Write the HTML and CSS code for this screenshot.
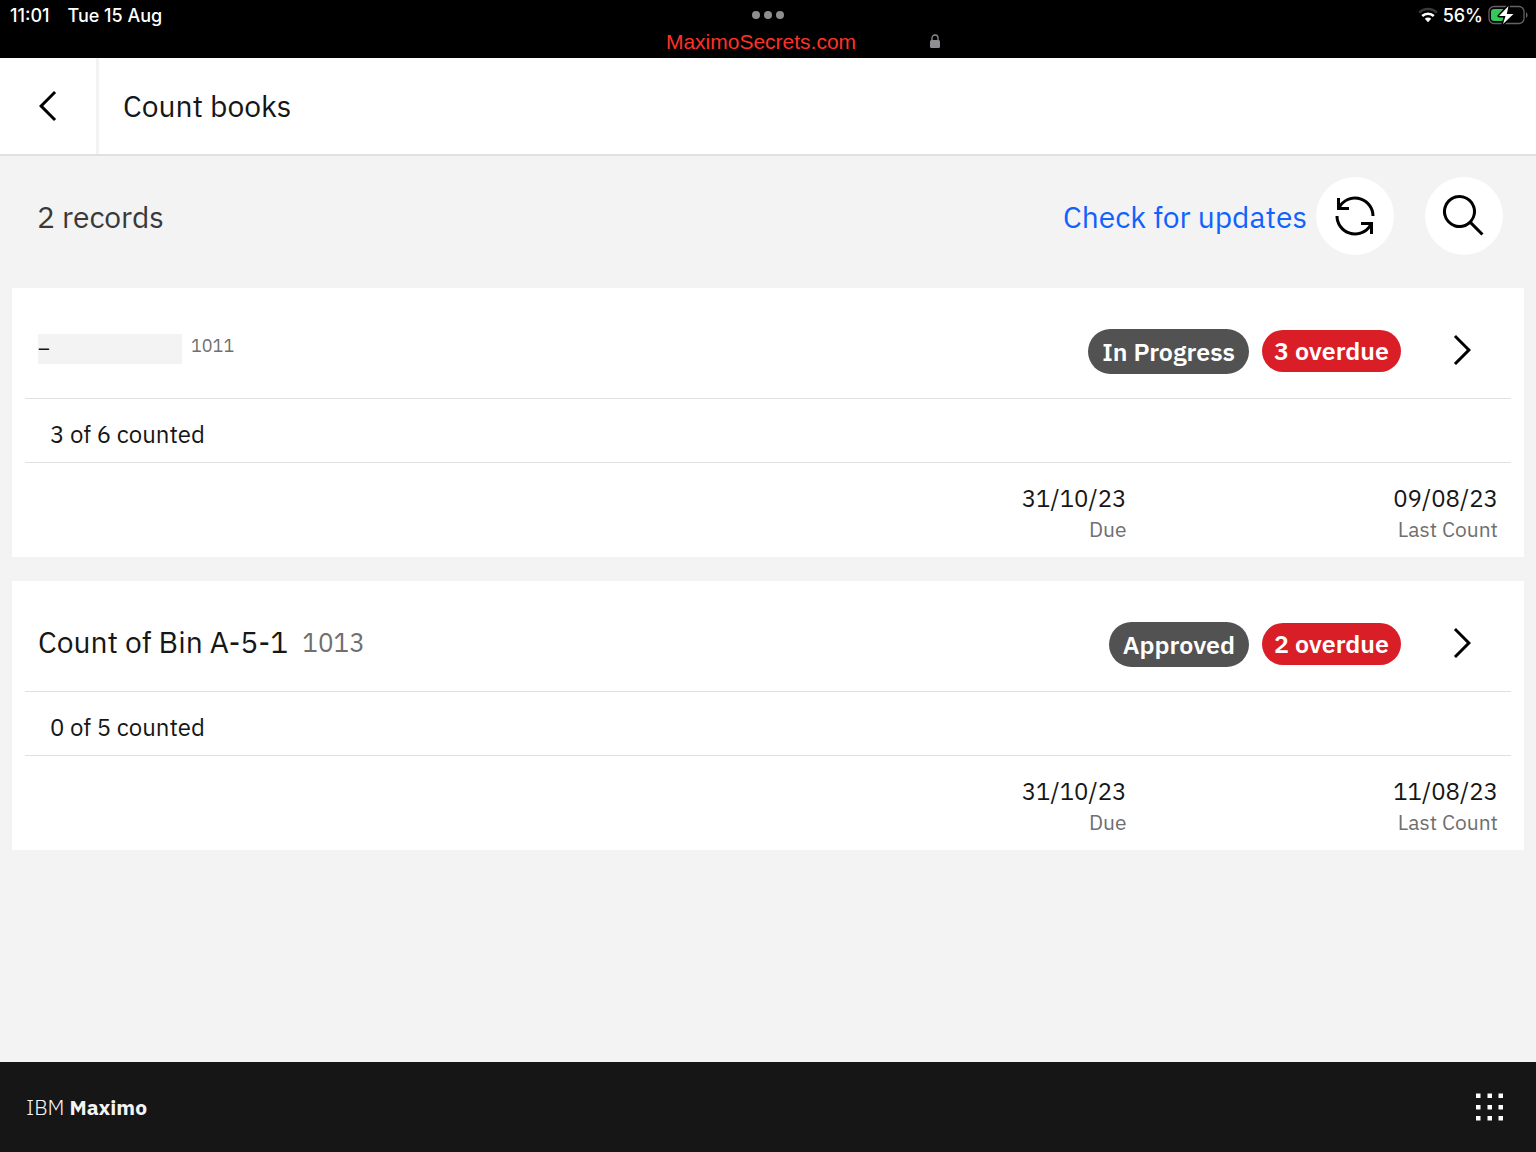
FILE: index.html
```html
<!DOCTYPE html>
<html lang="en">
<head>
  <meta charset="UTF-8">
  <meta name="viewport" content="width=device-width, initial-scale=1">
  <title>Count books</title>
  <link rel="stylesheet" href="styles.css">
</head>
<body>

  <!-- DEVICE STATUS BAR -->
  <div class="status-bar">
    <div class="status-row">
      <div class="status-time">
        <span>11:01</span>
        <span>Tue 15 Aug</span>
      </div>
      <svg class="dots" width="32" height="8" viewBox="0 0 32 8" aria-hidden="true">
        <circle cx="4" cy="4" r="4"/>
        <circle cx="16" cy="4" r="4"/>
        <circle cx="28" cy="4" r="4"/>
      </svg>
      <div class="status-power">
        <svg width="20" height="16" viewBox="0 0 20 16" aria-hidden="true">
          <path d="M1.2 5.6a12.6 12.6 0 0 1 17.6 0" fill="none" stroke="#3a3a3a" stroke-width="2.4"/>
          <path d="M4.2 9a8.4 8.4 0 0 1 11.6 0" fill="none" stroke="#fff" stroke-width="2.6"/>
          <path d="M10 15.2l-3.2-3.4a4.6 4.6 0 0 1 6.4 0z" fill="#fff"/>
        </svg>
        <span>56%</span>
        <svg width="40" height="20" viewBox="0 0 40 20" aria-hidden="true">
          <rect x="1" y="1.5" width="35" height="17" rx="5" fill="none" stroke="#636363" stroke-width="1.3"/>
          <path d="M38 7.2c2 .8 2 4.8 0 5.6z" fill="#636363"/>
          <path d="M6 4h14v12H6a3 3 0 0 1-3-3V7a3 3 0 0 1 3-3z" fill="#34c759"/>
          <path d="M20.5 1L11 11h6.5L15 19l10.5-10H18.8z" fill="#fff" stroke="#000" stroke-width="3" paint-order="stroke" stroke-linejoin="round"/>
        </svg>
      </div>
    </div>
    <div class="address">
      <a href="#">MaximoSecrets.com</a>
      <svg class="lock" width="10" height="14" viewBox="0 0 10 14" aria-hidden="true">
        <path d="M2 7V4a3 3 0 0 1 6 0v3" fill="none" stroke="#8e8e93" stroke-width="1.3"/>
        <rect y="6" width="10" height="8" rx="1.5" fill="#8e8e93"/>
      </svg>
    </div>
  </div>

  <header class="page-header">
    <button type="button" class="back" aria-label="Back">
      <svg class="icon" viewBox="0 0 32 32"><path d="M10 16 20 6l1.4 1.4-8.6 8.6 8.6 8.6L20 26z"/></svg>
    </button>
    <h1>Count books</h1>
  </header>

  <main>
    <div class="toolbar">
      <span class="records">2 records</span>
      <a class="updates" href="#">Check for updates</a>
      <button type="button" class="round refresh" aria-label="Refresh">
        <svg class="icon" viewBox="0 0 32 32">
          <path d="M12 10H6.78A11 11 0 0 1 27 16h2A13 13 0 0 0 6 7.68V4H4v8h8z"/>
          <path d="M20 22h5.22A11 11 0 0 1 5 16H3a13 13 0 0 0 23 8.32V28h2v-8h-8z"/>
        </svg>
      </button>
      <button type="button" class="round search" aria-label="Search">
        <svg class="icon" viewBox="0 0 32 32"><path d="M29 27.586l-7.552-7.552a11.018 11.018 0 1 0-1.414 1.414L27.586 29zM4 13a9 9 0 1 1 9 9 9.01 9.01 0 0 1-9-9z"/></svg>
      </button>
    </div>

    <section class="card">
      <div class="card-head">
        <h2 class="empty">–</h2>
        <span class="number small">1011</span>
        <span class="tag">In Progress</span>
        <span class="tag overdue">3 overdue</span>
        <button type="button" class="open" aria-label="Open 1011">
          <svg class="icon" viewBox="0 0 32 32"><path d="M22 16 12 26l-1.4-1.4 8.6-8.6-8.6-8.6L12 6z"/></svg>
        </button>
      </div>
      <p class="counted">3 of 6 counted</p>
      <dl class="dates">
        <div class="due"><dt>Due</dt><dd>31/10/23</dd></div>
        <div><dt>Last Count</dt><dd>09/08/23</dd></div>
      </dl>
    </section>

    <section class="card">
      <div class="card-head">
        <h2>Count of Bin A-5-1</h2>
        <span class="number">1013</span>
        <span class="tag">Approved</span>
        <span class="tag overdue">2 overdue</span>
        <button type="button" class="open" aria-label="Open 1013">
          <svg class="icon" viewBox="0 0 32 32"><path d="M22 16 12 26l-1.4-1.4 8.6-8.6-8.6-8.6L12 6z"/></svg>
        </button>
      </div>
      <p class="counted">0 of 5 counted</p>
      <dl class="dates">
        <div class="due"><dt>Due</dt><dd>31/10/23</dd></div>
        <div><dt>Last Count</dt><dd>11/08/23</dd></div>
      </dl>
    </section>
  </main>

  <footer>
    <span class="brand">IBM <strong>Maximo</strong></span>
    <button type="button" class="apps" aria-label="Applications">
      <svg width="28" height="28" viewBox="0 0 28 28">
        <path d="M0 .5h4.5V5H0zM11.500 .5H16V5h-4.500zM22.500 .5H27V5h-4.500zM0 12h4.500v4.500H0zM11.500 12H16v4.500h-4.500zM22.500 12H27v4.500h-4.500zM0 23h4.500v4.500H0zM11.500 23H16v4.500h-4.500zM22.500 23H27v4.500h-4.500z"/>
      </svg>
    </button>
  </footer>

</body>
</html>
```
FILE: styles.css
```css
* {
  box-sizing: border-box;
}
body {
  margin: 0;
  min-height: 100vh;
  display: flex;
  flex-direction: column;
  background: #f3f3f3;
  color: #161616;
  font-family: "IBM Plex Sans", "Noto Sans", sans-serif;
}
h1, h2, p, dl, dd {
  margin: 0;
  font-weight: 400;
}
a {
  text-decoration: none;
}
button {
  display: flex;
  align-items: center;
  justify-content: center;
  padding: 0;
  border: none;
  background: none;
  cursor: pointer;
}
.icon {
  width: 48px;
  height: 48px;
  fill: #000;
}

/* status bar */
.status-bar {
  height: 58px;
  background: #000;
  color: #fff;
  font-family: Inter, sans-serif;
  font-size: 18px;
  font-weight: 500;
}
.status-row {
  display: grid;
  grid-template-columns: 1fr auto 1fr;
  align-items: center;
  height: 30px;
  padding: 0 8px;
}
.status-time {
  display: flex;
  gap: 18px;
  padding-left: 2px;
}
.status-power {
  display: flex;
  align-items: center;
  justify-content: flex-end;
  gap: 5px;
}
.dots {
  fill: #8e8e8e;
}
.address {
  display: grid;
  grid-template-columns: 1fr auto 1fr;
  align-items: center;
  height: 24px;
}
.address a {
  grid-column: 2;
  color: #ff3126;
  font-family: "Liberation Sans", sans-serif;
  font-size: 21px;
  font-weight: 400;
  margin-right: 14px;
}
.lock {
  margin: 0 0 2px 60px;
}

/* header */
.page-header {
  display: flex;
  height: 98px;
  background: #fff;
  border-bottom: 2px solid #e0e0e0;
}
.back {
  width: 99px;
  border-right: 3px solid #f3f3f3;
}
h1 {
  padding-left: 24px;
  font-size: 30px;
  line-height: 96px;
}

main {
  flex: 1;
  padding: 0 12px;
}
.toolbar {
  display: flex;
  align-items: center;
  height: 132px;
  padding: 0 21px 12px 25px;
}
.records, .updates {
  font-size: 30px;
}
.records {
  margin-right: auto;
  color: #393939;
}
.updates {
  color: #0f62fe;
}
.round {
  width: 78px;
  height: 78px;
  border-radius: 50%;
  background: #fff;
}
.refresh {
  margin: 0 31px 0 9px;
}

/* cards */
.card {
  margin-bottom: 24px;
  padding: 0 13px;
  background: #fff;
}
.card-head {
  display: flex;
  align-items: center;
  height: 111px;
  padding: 16px 25px 0 13px;
  border-bottom: 1px solid #e0e0e0;
}
h2 {
  margin-bottom: 6px;
  font-size: 30px;
}
h2.empty {
  width: 144px;
  height: 30px;
  margin-bottom: 4px;
  background: #f3f3f3;
  font-size: 20px;
  line-height: 30px;
}
.number {
  margin: 0 auto 4px 14px;
  color: #6f6f6f;
  font-size: 26px;
}
.number.small {
  margin-left: 9px;
  margin-bottom: 12px;
  font-size: 18px;
}
.tag {
  padding: 0 14px;
  border-radius: 23px;
  background: #525252;
  color: #fff;
  font-size: 25px;
  font-weight: 600;
  line-height: 45px;
}
.tag.overdue {
  margin: 0 37px 0 13px;
  padding: 0 12px;
  background: #da1e28;
  line-height: 42px;
}
.open {
  margin-bottom: 3px;
}
.counted {
  padding: 8px 25px 0;
  height: 64px;
  border-bottom: 1px solid #e0e0e0;
  font-size: 24px;
  line-height: 54px;
}
.dates {
  display: grid;
  grid-template-columns: repeat(4, 1fr);
  height: 94px;
  padding-top: 19px;
  text-align: right;
}
.dates div {
  display: flex;
  flex-direction: column-reverse;
  justify-content: flex-end;
  padding-right: 13px;
}
.dates .due {
  grid-column: 3;
}
dt {
  color: #6f6f6f;
  font-size: 21px;
  line-height: 30px;
}
dd {
  font-size: 24px;
  line-height: 32px;
}

footer {
  display: flex;
  align-items: center;
  justify-content: space-between;
  height: 90px;
  padding: 0 32px 0 26px;
  background: #161616;
  color: #f4f4f4;
}
.brand {
  font-size: 21px;
  font-weight: 300;
}
.brand strong {
  font-weight: 700;
}
.apps {
  fill: #fff;
}
```
